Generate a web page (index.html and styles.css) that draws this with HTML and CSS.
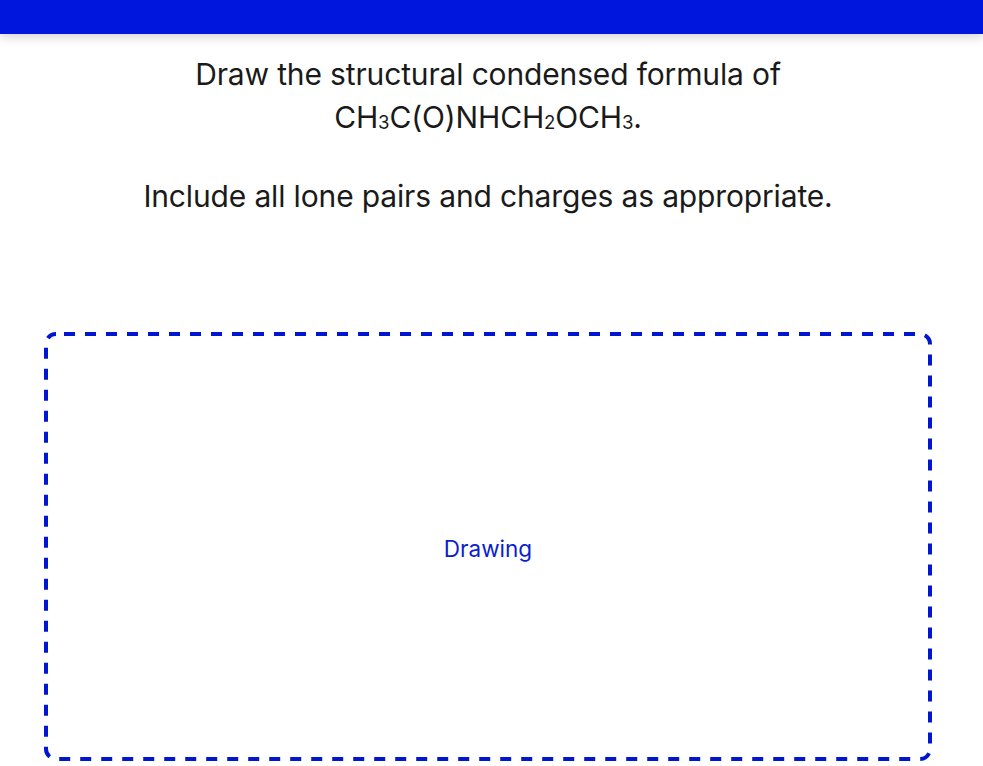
FILE: index.html
```html
<!DOCTYPE html>
<html lang="en">
<head>
<meta charset="utf-8">
<title>Question</title>
<link rel="stylesheet" href="styles.css">
</head>
<body>
<header class="topbar"></header>
<main class="question">
  <p class="prompt">Draw the structural condensed formula of<br>CH<sub>3</sub>C(O)NHCH<sub>2</sub>OCH<sub>3</sub>.</p>
  <p class="prompt note">Include all lone pairs and charges as appropriate.</p>
  <div class="canvas">
    <svg class="canvas-frame" width="888" height="429" viewBox="0 0 888 429" aria-hidden="true">
      <rect x="2" y="2" width="884" height="425" rx="10" ry="10" fill="none" stroke="#0016d0" stroke-width="4" stroke-dasharray="11 10" stroke-dashoffset="-8"/>
    </svg>
    <span class="canvas-label">Drawing</span>
  </div>
</main>
</body>
</html>
```

FILE: styles.css
```css
html, body {
  margin: 0;
  padding: 0;
  background: #ffffff;
}

body {
  font-family: Inter, "Noto Sans", sans-serif;
  color: #1a1a1a;
  overflow: hidden;
}

.topbar {
  height: 34px;
  background: #0016dc;
  box-shadow: 0 3px 10px rgba(0, 0, 0, 0.18);
}

.question {
  display: flex;
  flex-direction: column;
  align-items: center;
  padding: 19px 51px 0 44px;
}

.prompt {
  margin: 0;
  font-size: 30px;
  line-height: 43px;
  text-align: center;
  letter-spacing: -0.15px;
}

.prompt sub {
  font-size: 0.62em;
  vertical-align: baseline;
  position: relative;
  top: 0.08em;
}

.note {
  margin-top: 32px;
}

.canvas {
  position: relative;
  align-self: stretch;
  height: 429px;
  margin-top: 114px;
  display: flex;
  align-items: center;
  justify-content: center;
}

.canvas-frame {
  position: absolute;
  inset: 0;
}

.canvas-label {
  color: #0a1ed0;
  font-size: 22.5px;
  margin-top: 4px;
}
```
